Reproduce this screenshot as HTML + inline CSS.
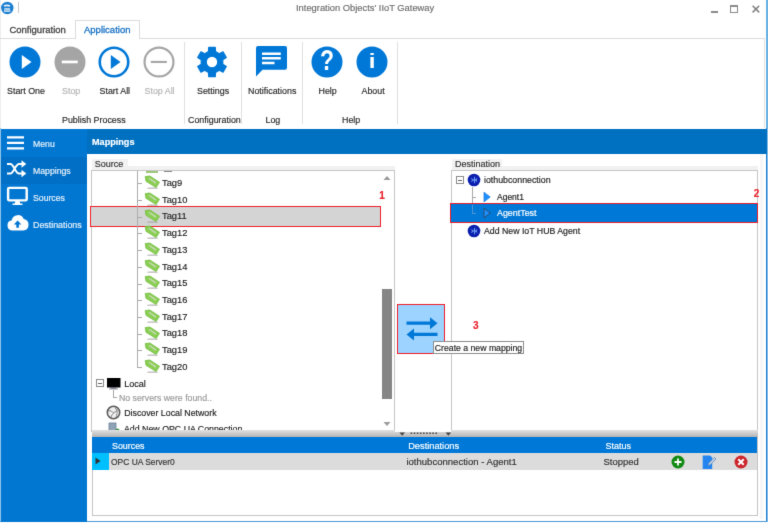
<!DOCTYPE html>
<html lang="en"><head><meta charset="utf-8"><title>Integration Objects' IIoT Gateway</title>
<style>
html,body{margin:0;padding:0;}
body{width:768px;height:524px;overflow:hidden;background:#fff;position:relative;font-family:"Liberation Sans",sans-serif;}
#app{position:absolute;left:0;top:0;width:768px;height:524px;overflow:hidden;background:#fff;filter:url(#soft);}
.b{position:absolute;display:block;}
.t{position:absolute;white-space:pre;line-height:1.2;font-family:"Liberation Sans",sans-serif;-webkit-text-stroke:0.16px currentColor;}
</style></head><body>
<svg width="0" height="0" style="position:absolute;left:0;top:0" aria-hidden="true"><filter id="soft" x="0" y="0" width="100%" height="100%" color-interpolation-filters="sRGB"><feConvolveMatrix order="3" kernelMatrix="0.125 1.0 0.125 1.0 8.0 1.0 0.125 1.0 0.125" edgeMode="duplicate" preserveAlpha="true"/></filter></svg>
<div id="app">
<div class="b" style="left:0px;top:0px;width:1px;height:128px;background:#ededed;"></div>
<div class="b" style="left:0px;top:128px;width:1px;height:394px;background:#8cc3ea;"></div>
<div class="b" style="left:766px;top:0px;width:2px;height:128px;background:#6cb2e3;"></div>
<div class="b" style="left:765.8px;top:128px;width:1.2px;height:394px;background:#1f80d2;"></div>
<div class="b" style="left:767px;top:128px;width:1px;height:394px;background:#8ac0ea;"></div>
<div class="b" style="left:0px;top:521px;width:767px;height:1px;background:#4a9bdb;"></div>
<svg class="b" style="left:0;top:1px" width="16" height="16" viewBox="0 0 16 16">
<circle cx="7.3" cy="7" r="6.2" fill="#1b7fd0"/>
<path d="M4.3 7.2h5.6l0.6 3.8H3.9z" fill="#e8f2fb"/><path d="M3.6 4.2q3.6-1.600 6.800 0l-0.800 1.600q-2.600-0.900-5.200 0z" fill="#e8f2fb"/>
<path d="M4 8.800h6.200M4 10h6.400" stroke="#1b7fd0" stroke-width="0.500"/>
</svg>
<div class="b" style="left:18px;top:2px;width:1px;height:11px;background:#c8c8c8;"></div>
<div class="t " style="left:296px;top:3.1px;font-size:9.35px;color:#6e6e6e;">Integration Objects' IIoT Gateway</div>
<div class="b" style="left:711px;top:11px;width:7px;height:2px;background:#8a8a8a;"></div>
<div class="b" style="left:730.2px;top:5px;width:8px;height:8px;border:1px solid #8a8a8a;box-sizing:border-box;border-top-width:2px;"></div>
<svg class="b" style="left:751px;top:4px" width="10" height="10" viewBox="0 0 10 10"><path d="M1.600 1.800l6.600 6.600M8.200 1.800l-6.600 6.600" stroke="#808080" stroke-width="1.5" fill="none"/></svg>
<div class="b" style="left:0px;top:38px;width:765px;height:1px;background:#dcdcdc;"></div>
<div class="b" style="left:75px;top:20px;width:64.5px;height:19px;background:#fff;border:1px solid #dcdcdc;box-sizing:border-box;border-bottom:none;"></div>
<div class="t " style="left:9.4px;top:23.6px;font-size:9.5px;color:#444;-webkit-text-stroke-width:0.3px;">Configuration</div>
<div class="t " style="left:84px;top:23.6px;font-size:9.5px;color:#1a73c4;-webkit-text-stroke-width:0.3px;">Application</div>
<div class="b" style="left:764px;top:39px;width:1px;height:89px;background:#e4e4e4;"></div>
<svg class="b" style="left:8.4px;top:44.5px" width="34" height="34" viewBox="-17 -17 34 34"><circle r="15.5" fill="#0078d7"/><path d="M-3.2 -7.1L6.5 0L-3.2 7.1z" fill="#fff"/></svg>
<svg class="b" style="left:52.7px;top:44.5px" width="34" height="34" viewBox="-17 -17 34 34"><circle r="15.5" fill="#a5a5a5"/><rect x="-8.2" y="-1.4" width="16" height="2.7" fill="#fff"/></svg>
<svg class="b" style="left:97.4px;top:44.5px" width="34" height="34" viewBox="-17 -17 34 34"><circle r="14.25" fill="#fff" stroke="#0078d7" stroke-width="2.6"/><path d="M-3.2 -7.1L6.5 0L-3.2 7.1z" fill="#0078d7"/></svg>
<svg class="b" style="left:141.6px;top:44.5px" width="34" height="34" viewBox="-17 -17 34 34"><circle r="14.45" fill="#fff" stroke="#a5a5a5" stroke-width="2.2"/><rect x="-8.2" y="-1.1" width="16" height="2.1" fill="#a5a5a5"/></svg>
<svg class="b" style="left:195.2px;top:44.5px" width="34" height="34" viewBox="-17 -17 34 34"><path d="M-3.51 -10.43 L-3.27 -14.64 L3.27 -14.64 L3.51 -10.43 L7.27 -8.25 L11.04 -10.15 L14.31 -4.49 L10.78 -2.17 L10.78 2.17 L14.31 4.49 L11.04 10.15 L7.27 8.25 L3.51 10.43 L3.27 14.64 L-3.27 14.64 L-3.51 10.43 L-7.27 8.25 L-11.04 10.15 L-14.31 4.49 L-10.78 2.17 L-10.78 -2.17 L-14.31 -4.49 L-11.04 -10.15 L-7.27 -8.25Z M5.8 0 A5.8 5.8 0 1 0 -5.8 0 A5.8 5.8 0 1 0 5.8 0Z" fill="#0078d7" fill-rule="evenodd" stroke="#0078d7" stroke-width="1.2" stroke-linejoin="round"/></svg>
<svg class="b" style="left:254.2px;top:44px" width="36" height="34" viewBox="0 0 36 34">
<path d="M4 2h27a2 2 0 0 1 2 2v19.8a2 2 0 0 1-2 2H8.5L2 32.4V4a2 2 0 0 1 2-2z" fill="#0078d7"/>
<path d="M8 9.7h18.8M8 14.3h18.8M8 19h12.5" stroke="#fff" stroke-width="2.6" fill="none"/></svg>
<svg class="b" style="left:310.3px;top:44.5px" width="34" height="34" viewBox="-17 -17 34 34"><circle r="15.5" fill="#0078d7"/><text x="0" y="6.5" transform="scale(1,1.3)" text-anchor="middle" font-family="Liberation Sans, sans-serif" font-weight="bold" font-size="23" fill="#fff">?</text></svg>
<svg class="b" style="left:354.7px;top:44.5px" width="34" height="34" viewBox="-17 -17 34 34"><circle r="15.5" fill="#0078d7"/><text x="0" y="6.4" transform="scale(1.18,1)" text-anchor="middle" font-family="Liberation Sans, sans-serif" font-weight="bold" font-size="20.5" fill="#fff">i</text></svg>
<div class="t " style="left:7px;top:85.7px;font-size:8.9px;color:#2a2a2a;">Start One</div>
<div class="t " style="left:62px;top:85.7px;font-size:8.9px;color:#b4b4b4;">Stop</div>
<div class="t " style="left:99.5px;top:85.7px;font-size:8.9px;color:#2a2a2a;">Start All</div>
<div class="t " style="left:144.5px;top:85.7px;font-size:8.9px;color:#b4b4b4;">Stop All</div>
<div class="t " style="left:197px;top:85.7px;font-size:8.9px;color:#2a2a2a;">Settings</div>
<div class="t " style="left:248px;top:85.7px;font-size:8.9px;color:#2a2a2a;">Notifications</div>
<div class="t " style="left:318.5px;top:85.7px;font-size:8.9px;color:#2a2a2a;">Help</div>
<div class="t " style="left:361.5px;top:85.7px;font-size:8.9px;color:#2a2a2a;">About</div>
<div class="t " style="left:62px;top:114.8px;font-size:8.9px;color:#2a2a2a;">Publish Process</div>
<div class="t " style="left:188px;top:114.8px;font-size:8.9px;color:#2a2a2a;">Configuration</div>
<div class="t " style="left:265.5px;top:114.8px;font-size:8.9px;color:#2a2a2a;">Log</div>
<div class="t " style="left:342px;top:114.8px;font-size:8.9px;color:#2a2a2a;">Help</div>
<div class="b" style="left:184px;top:42px;width:1px;height:82px;background:#e0e0e0;"></div>
<div class="b" style="left:241px;top:42px;width:1px;height:82px;background:#e0e0e0;"></div>
<div class="b" style="left:302px;top:42px;width:1px;height:82px;background:#e0e0e0;"></div>
<div class="b" style="left:397px;top:42px;width:1px;height:82px;background:#e0e0e0;"></div>
<div class="b" style="left:1px;top:128.5px;width:766px;height:25.1px;background:#0070c0;"></div>
<div class="b" style="left:1px;top:128.5px;width:86px;height:393px;background:#0277d2;"></div>
<div class="b" style="left:1px;top:156.5px;width:86px;height:27px;background:#006fc5;"></div>
<div class="t " style="left:92px;top:136.5px;font-size:9.1px;color:#fff;font-weight:bold;">Mappings</div>
<svg class="b" style="left:6px;top:134px" width="20" height="18" viewBox="0 0 20 18"><path d="M1 3.3h17M1 8.8h17M1 14.3h17" stroke="#fff" stroke-width="2.3"/></svg>
<svg class="b" style="left:6px;top:159px" width="22" height="20" viewBox="0 0 22 20">
<path d="M1 5h3.5c3 0 5 9.5 8.500 9.500H17M1 14.500h3.500c3 0 5-9.500 8.500-9.500H17" stroke="#fff" stroke-width="2" fill="none"/>
<path d="M15.500 1.300L20.300 5l-4.800 3.700zM15.500 10.800l4.800 3.700-4.800 3.700z" fill="#fff"/></svg>
<svg class="b" style="left:6px;top:186px" width="24" height="20" viewBox="0 0 24 20">
<rect x="2.1" y="1.900" width="18.600" height="12.500" rx="1.200" fill="none" stroke="#fff" stroke-width="2.4"/>
<path d="M9.500 15h4l0.800 2.600h2.200v1.400h-10v-1.400h2.200z" fill="#fff"/></svg>
<svg class="b" style="left:6px;top:212px" width="24" height="20" viewBox="0 0 24 20">
<path d="M6.500 18.500a5.200 5.200 0 0 1-0.800-10.300a6.300 6.300 0 0 1 12-1.200a5.800 5.800 0 0 1-0.500 11.500z" fill="#fff"/>
<path d="M11.600 8.600l3.800 4h-2.500v3.200h-2.600v-3.200H7.800z" fill="#0277d2"/></svg>
<div class="t " style="left:33px;top:138.5px;font-size:8.7px;color:#e8f2fb;">Menu</div>
<div class="t " style="left:33px;top:165.5px;font-size:8.7px;color:#e8f2fb;">Mappings</div>
<div class="t " style="left:33px;top:192.5px;font-size:8.7px;color:#e8f2fb;">Sources</div>
<div class="t " style="left:33px;top:219.5px;font-size:8.85px;color:#e8f2fb;">Destinations</div>
<div class="b" style="left:87px;top:153.6px;width:678.8px;height:367.4px;background:#fff;"></div>
<div class="b" style="left:760px;top:154px;width:2.8px;height:365px;background:#f6f6f6;"></div>
<div class="b" style="left:92px;top:159px;width:36px;height:12px;background:#f3f3f3;"></div>
<div class="b" style="left:92px;top:165.5px;width:303px;height:5px;background:#f1f1f1;"></div>
<div class="t " style="left:94.7px;top:158.9px;font-size:9px;color:#333;">Source</div>
<div class="b" style="left:91.3px;top:169.7px;width:303.5px;height:262px;background:#fff;border:1.4px solid #c6c6c6;box-sizing:border-box;"></div>
<div class="b" style="left:90.3px;top:206.3px;width:290.9px;height:21.1px;background:#d4d4d4;border:1.8px solid #ee1f28;box-sizing:border-box;"></div>
<div class="b" style="left:137.2px;top:171px;width:1.3px;height:197px;background:#adadad;"></div>
<div class="b" style="left:138px;top:183px;width:4px;height:1px;background:#a8a8a8;"></div>
<svg class="b" style="left:144.3px;top:175.2px" width="17" height="15" viewBox="0 0 17 15">
<ellipse cx="8.500" cy="13.200" rx="5.500" ry="0.900" fill="#9a9a9a" opacity="0.550"/>
<path d="M1.200 1.600L5.800 1l9.700 6.300-3.400 5.200L2 6.300z" fill="#8acf53" stroke="#74bb40" stroke-width="0.800" stroke-linejoin="round"/>
<path d="M4 3.600l2.400-0.300 6 4-1 1.500z" fill="#c6d8b6" opacity="0.900"/></svg>
<div class="t " style="left:162px;top:178.0px;font-size:9.35px;color:#222;">Tag9</div>
<div class="b" style="left:138px;top:200px;width:4px;height:1px;background:#a8a8a8;"></div>
<svg class="b" style="left:144.3px;top:191.9px" width="17" height="15" viewBox="0 0 17 15">
<ellipse cx="8.500" cy="13.200" rx="5.500" ry="0.900" fill="#9a9a9a" opacity="0.550"/>
<path d="M1.200 1.600L5.800 1l9.700 6.300-3.400 5.200L2 6.300z" fill="#8acf53" stroke="#74bb40" stroke-width="0.800" stroke-linejoin="round"/>
<path d="M4 3.600l2.400-0.300 6 4-1 1.500z" fill="#c6d8b6" opacity="0.900"/></svg>
<div class="t " style="left:162px;top:194.7px;font-size:9.35px;color:#222;">Tag10</div>
<div class="b" style="left:138px;top:217px;width:4px;height:1px;background:#a8a8a8;"></div>
<svg class="b" style="left:144.3px;top:208.6px" width="17" height="15" viewBox="0 0 17 15">
<ellipse cx="8.500" cy="13.200" rx="5.500" ry="0.900" fill="#9a9a9a" opacity="0.550"/>
<path d="M1.200 1.600L5.800 1l9.700 6.300-3.400 5.200L2 6.300z" fill="#8acf53" stroke="#74bb40" stroke-width="0.800" stroke-linejoin="round"/>
<path d="M4 3.600l2.400-0.300 6 4-1 1.500z" fill="#c6d8b6" opacity="0.900"/></svg>
<div class="t " style="left:162px;top:211.4px;font-size:9.35px;color:#222;">Tag11</div>
<div class="b" style="left:138px;top:233px;width:4px;height:1px;background:#a8a8a8;"></div>
<svg class="b" style="left:144.3px;top:225.3px" width="17" height="15" viewBox="0 0 17 15">
<ellipse cx="8.500" cy="13.200" rx="5.500" ry="0.900" fill="#9a9a9a" opacity="0.550"/>
<path d="M1.200 1.600L5.800 1l9.700 6.300-3.400 5.200L2 6.300z" fill="#8acf53" stroke="#74bb40" stroke-width="0.800" stroke-linejoin="round"/>
<path d="M4 3.600l2.400-0.300 6 4-1 1.500z" fill="#c6d8b6" opacity="0.900"/></svg>
<div class="t " style="left:162px;top:228.1px;font-size:9.35px;color:#222;">Tag12</div>
<div class="b" style="left:138px;top:250px;width:4px;height:1px;background:#a8a8a8;"></div>
<svg class="b" style="left:144.3px;top:242.0px" width="17" height="15" viewBox="0 0 17 15">
<ellipse cx="8.500" cy="13.200" rx="5.500" ry="0.900" fill="#9a9a9a" opacity="0.550"/>
<path d="M1.200 1.600L5.800 1l9.700 6.300-3.400 5.200L2 6.300z" fill="#8acf53" stroke="#74bb40" stroke-width="0.800" stroke-linejoin="round"/>
<path d="M4 3.600l2.400-0.300 6 4-1 1.500z" fill="#c6d8b6" opacity="0.900"/></svg>
<div class="t " style="left:162px;top:244.8px;font-size:9.35px;color:#222;">Tag13</div>
<div class="b" style="left:138px;top:267px;width:4px;height:1px;background:#a8a8a8;"></div>
<svg class="b" style="left:144.3px;top:258.7px" width="17" height="15" viewBox="0 0 17 15">
<ellipse cx="8.500" cy="13.200" rx="5.500" ry="0.900" fill="#9a9a9a" opacity="0.550"/>
<path d="M1.200 1.600L5.800 1l9.700 6.300-3.400 5.200L2 6.300z" fill="#8acf53" stroke="#74bb40" stroke-width="0.800" stroke-linejoin="round"/>
<path d="M4 3.600l2.400-0.300 6 4-1 1.500z" fill="#c6d8b6" opacity="0.900"/></svg>
<div class="t " style="left:162px;top:261.5px;font-size:9.35px;color:#222;">Tag14</div>
<div class="b" style="left:138px;top:284px;width:4px;height:1px;background:#a8a8a8;"></div>
<svg class="b" style="left:144.3px;top:275.4px" width="17" height="15" viewBox="0 0 17 15">
<ellipse cx="8.500" cy="13.200" rx="5.500" ry="0.900" fill="#9a9a9a" opacity="0.550"/>
<path d="M1.200 1.600L5.800 1l9.700 6.300-3.400 5.200L2 6.300z" fill="#8acf53" stroke="#74bb40" stroke-width="0.800" stroke-linejoin="round"/>
<path d="M4 3.600l2.400-0.300 6 4-1 1.500z" fill="#c6d8b6" opacity="0.900"/></svg>
<div class="t " style="left:162px;top:278.2px;font-size:9.35px;color:#222;">Tag15</div>
<div class="b" style="left:138px;top:300px;width:4px;height:1px;background:#a8a8a8;"></div>
<svg class="b" style="left:144.3px;top:292.1px" width="17" height="15" viewBox="0 0 17 15">
<ellipse cx="8.500" cy="13.200" rx="5.500" ry="0.900" fill="#9a9a9a" opacity="0.550"/>
<path d="M1.200 1.600L5.800 1l9.700 6.300-3.400 5.200L2 6.300z" fill="#8acf53" stroke="#74bb40" stroke-width="0.800" stroke-linejoin="round"/>
<path d="M4 3.600l2.400-0.300 6 4-1 1.500z" fill="#c6d8b6" opacity="0.900"/></svg>
<div class="t " style="left:162px;top:294.9px;font-size:9.35px;color:#222;">Tag16</div>
<div class="b" style="left:138px;top:317px;width:4px;height:1px;background:#a8a8a8;"></div>
<svg class="b" style="left:144.3px;top:308.8px" width="17" height="15" viewBox="0 0 17 15">
<ellipse cx="8.500" cy="13.200" rx="5.500" ry="0.900" fill="#9a9a9a" opacity="0.550"/>
<path d="M1.200 1.600L5.800 1l9.700 6.300-3.400 5.200L2 6.300z" fill="#8acf53" stroke="#74bb40" stroke-width="0.800" stroke-linejoin="round"/>
<path d="M4 3.600l2.400-0.300 6 4-1 1.500z" fill="#c6d8b6" opacity="0.900"/></svg>
<div class="t " style="left:162px;top:311.6px;font-size:9.35px;color:#222;">Tag17</div>
<div class="b" style="left:138px;top:334px;width:4px;height:1px;background:#a8a8a8;"></div>
<svg class="b" style="left:144.3px;top:325.5px" width="17" height="15" viewBox="0 0 17 15">
<ellipse cx="8.500" cy="13.200" rx="5.500" ry="0.900" fill="#9a9a9a" opacity="0.550"/>
<path d="M1.200 1.600L5.800 1l9.700 6.300-3.400 5.200L2 6.300z" fill="#8acf53" stroke="#74bb40" stroke-width="0.800" stroke-linejoin="round"/>
<path d="M4 3.600l2.400-0.300 6 4-1 1.500z" fill="#c6d8b6" opacity="0.900"/></svg>
<div class="t " style="left:162px;top:328.3px;font-size:9.35px;color:#222;">Tag18</div>
<div class="b" style="left:138px;top:350px;width:4px;height:1px;background:#a8a8a8;"></div>
<svg class="b" style="left:144.3px;top:342.2px" width="17" height="15" viewBox="0 0 17 15">
<ellipse cx="8.500" cy="13.200" rx="5.500" ry="0.900" fill="#9a9a9a" opacity="0.550"/>
<path d="M1.200 1.600L5.800 1l9.700 6.300-3.400 5.200L2 6.300z" fill="#8acf53" stroke="#74bb40" stroke-width="0.800" stroke-linejoin="round"/>
<path d="M4 3.600l2.400-0.300 6 4-1 1.500z" fill="#c6d8b6" opacity="0.900"/></svg>
<div class="t " style="left:162px;top:345.0px;font-size:9.35px;color:#222;">Tag19</div>
<div class="b" style="left:138px;top:367px;width:4px;height:1px;background:#a8a8a8;"></div>
<svg class="b" style="left:144.3px;top:358.9px" width="17" height="15" viewBox="0 0 17 15">
<ellipse cx="8.500" cy="13.200" rx="5.500" ry="0.900" fill="#9a9a9a" opacity="0.550"/>
<path d="M1.200 1.600L5.800 1l9.700 6.300-3.400 5.200L2 6.300z" fill="#8acf53" stroke="#74bb40" stroke-width="0.800" stroke-linejoin="round"/>
<path d="M4 3.600l2.400-0.300 6 4-1 1.500z" fill="#c6d8b6" opacity="0.900"/></svg>
<div class="t " style="left:162px;top:361.7px;font-size:9.35px;color:#222;">Tag20</div>
<div class="b" style="left:146px;top:171px;width:12px;height:1.5px;background:#9cc77a;"></div>
<div class="b" style="left:164px;top:171px;width:8px;height:1px;background:#888;"></div>
<div class="b" style="left:96px;top:379px;width:8px;height:8px;background:#fff;border:1px solid #8a8a8a;box-sizing:border-box;"></div>
<div class="b" style="left:98px;top:382.5px;width:4px;height:1px;background:#666;"></div>
<svg class="b" style="left:106px;top:377px" width="16" height="14" viewBox="0 0 16 14"><rect x="1" y="1" width="13.500" height="9.500" fill="#000"/><rect x="4.500" y="10.500" width="6" height="1.200" fill="#445"/><rect x="3" y="11.500" width="9" height="1" fill="#99a"/></svg>
<div class="t " style="left:124.2px;top:378.9px;font-size:9.05px;color:#222;">Local</div>
<div class="b" style="left:113px;top:390px;width:1px;height:8px;background:#a8a8a8;"></div>
<div class="b" style="left:113px;top:397px;width:4px;height:1px;background:#a8a8a8;"></div>
<div class="t " style="left:119px;top:392.5px;font-size:8.75px;color:#9a9a9a;">No servers were found..</div>
<svg class="b" style="left:106px;top:405px" width="16" height="16" viewBox="0 0 16 16"><circle cx="7.500" cy="7.500" r="6.200" fill="#f0f0f0" stroke="#5a5a5a" stroke-width="1.600"/><path d="M2 6c3-1 4 1 5.500 1.500S11 5 13 4M5 13c0-3 2-4 3-5M9 2.500c1 2 2.500 3 2 6s-1 3-1 4" stroke="#777" stroke-width="0.900" fill="none"/></svg>
<div class="t " style="left:124.2px;top:407.9px;font-size:8.8px;color:#222;">Discover Local Network</div>
<svg class="b" style="left:107px;top:422px" width="14" height="10" viewBox="0 0 14 10"><rect x="2" y="1" width="7" height="9" fill="#8fa3b8" stroke="#6b7f95" stroke-width="0.800"/><circle cx="10.500" cy="8.500" r="2" fill="#3a9a3a"/></svg>
<div class="b" style="left:122px;top:423px;width:130px;height:8.5px;overflow:hidden"><div class="t" style="left:2px;top:0.5px;font-size:8.8px;color:#222">Add New OPC UA Connection</div></div>
<div class="b" style="left:382px;top:171px;width:11px;height:260px;background:#fff;"></div>
<div class="b" style="left:381.5px;top:288.8px;width:10.5px;height:110px;background:#858585;"></div>
<svg class="b" style="left:383px;top:175px" width="8" height="6" viewBox="0 0 8 6"><path d="M0.500 5L4 1l3.500 4z" fill="#9a9a9a"/></svg>
<svg class="b" style="left:383px;top:420.700px" width="8" height="6" viewBox="0 0 8 6"><path d="M0.500 1L4 5l3.500-4z" fill="#9a9a9a"/></svg>
<div class="b" style="left:397.4px;top:303.5px;width:48.1px;height:50px;background:#9dd3ff;border:1.8px solid #ee1f28;box-sizing:border-box;"></div>
<svg class="b" style="left:404px;top:314px" width="36" height="30" viewBox="0 0 36 30">
<path d="M2.500 7.500h23.500V3.200l7.500 6-7.500 6V10.700H2.500z" fill="#0078d7"/>
<path d="M33.500 18.700H10v-4.300l-7.500 6 7.500 6V21.900h23.500z" fill="#0078d7"/></svg>
<div class="b" style="left:452px;top:159px;width:50px;height:12px;background:#f3f3f3;"></div>
<div class="b" style="left:452px;top:165.5px;width:306px;height:5px;background:#f1f1f1;"></div>
<div class="t " style="left:455px;top:158.9px;font-size:9px;color:#333;">Destination</div>
<div class="b" style="left:451.2px;top:169.7px;width:306.6px;height:262px;background:#fff;border:1.4px solid #c6c6c6;box-sizing:border-box;"></div>
<div class="b" style="left:456px;top:176px;width:8px;height:8px;background:#fff;border:1px solid #8a8a8a;box-sizing:border-box;"></div>
<div class="b" style="left:458px;top:179.5px;width:4px;height:1px;background:#666;"></div>
<svg class="b" style="left:467px;top:173px" width="14" height="14" viewBox="0 0 14 14"><circle cx="7" cy="7" r="6.300" fill="#0b1fae"/><path d="M7.600 3.800v6.400M4.600 5.200q2 1.800 0 3.600M9.800 5.400q-1.600 1.600 0 3.200M5.600 7h4" stroke="#7fb2ff" stroke-width="0.900" fill="none"/></svg>
<div class="t " style="left:484px;top:175px;font-size:8.8px;color:#222;">iothubconnection</div>
<div class="b" style="left:472px;top:187px;width:1px;height:27px;background:#a8a8a8;"></div>
<div class="b" style="left:472px;top:197px;width:4px;height:1px;background:#a8a8a8;"></div>
<svg class="b" style="left:483px;top:191px" width="9" height="12" viewBox="0 0 9 12"><path d="M1 1.200L7.200 6 1 10.800z" fill="#1e90ff" stroke="#1e7fe0" stroke-width="0.800"/></svg>
<div class="t " style="left:497px;top:191.9px;font-size:8.5px;color:#222;">Agent1</div>
<div class="b" style="left:450.2px;top:202.9px;width:307.5px;height:20px;background:#0078d7;border:1.8px solid #ee1f28;box-sizing:border-box;"></div>
<div class="b" style="left:472px;top:205px;width:1px;height:9px;background:#4f96d4;"></div>
<div class="b" style="left:472px;top:213px;width:4px;height:1px;background:#4f96d4;"></div>
<svg class="b" style="left:483px;top:207px" width="9" height="12" viewBox="0 0 9 12"><path d="M1 1.200L7.200 6 1 10.800z" fill="#1e90ff" stroke="#2c4c6e" stroke-width="1"/></svg>
<div class="t " style="left:497px;top:208.2px;font-size:8.9px;color:#fff;">AgentTest</div>
<svg class="b" style="left:467px;top:223.5px" width="14" height="14" viewBox="0 0 14 14"><circle cx="7" cy="7" r="6.300" fill="#0b1fae"/><path d="M7.600 3.800v6.400M4.600 5.200q2 1.800 0 3.600M9.800 5.400q-1.600 1.600 0 3.200M5.600 7h4" stroke="#7fb2ff" stroke-width="0.900" fill="none"/></svg>
<div class="t " style="left:484px;top:225.5px;font-size:8.75px;color:#222;">Add New IoT HUB Agent</div>
<div class="b" style="left:433px;top:341px;width:91px;height:13px;background:#fff;border:1px solid #8c8c8c;box-sizing:border-box;"></div>
<div class="t " style="left:434.8px;top:343px;font-size:8.7px;color:#222;">Create a new mapping</div>
<div class="b" style="left:92px;top:431px;width:666px;height:85px;background:#fff;border:1px solid #c4c4c4;box-sizing:border-box;border-top:none;"></div>
<div class="b" style="left:92px;top:430.3px;width:666px;height:6.5px;background:linear-gradient(#e2e2e2,#b4b4b4);"></div>
<div class="b" style="left:394.8px;top:429px;width:56.4px;height:3px;background:#fff;"></div>
<svg class="b" style="left:398.5px;top:430.700px" width="54" height="6" viewBox="0 0 54 6"><path d="M0.400 1.500h5.600l-2.800 3.300zM46.600 1.500h5.600l-2.800 3.300z" fill="#454545"/><path d="M11.600 2.300h28" stroke="#454545" stroke-width="1.500" stroke-dasharray="1.600 1.500"/></svg>
<div class="b" style="left:92px;top:437px;width:665px;height:16px;background:#0078d7;"></div>
<div class="b" style="left:92px;top:453px;width:665px;height:17px;background:#dcdcdc;"></div>
<div class="b" style="left:92px;top:453px;width:16.5px;height:17px;background:#00bfff;"></div>
<svg class="b" style="left:94px;top:456px" width="8" height="10" viewBox="0 0 8 10"><path d="M1.500 1.500L6.500 5l-5 3.500z" fill="#333"/></svg>
<div class="t " style="left:112px;top:440.8px;font-size:8.9px;color:#fff;">Sources</div>
<div class="t " style="left:408.2px;top:440.8px;font-size:9.25px;color:#fff;">Destinations</div>
<div class="t " style="left:605.4px;top:440.8px;font-size:9.0px;color:#fff;">Status</div>
<div class="t " style="left:111px;top:456.6px;font-size:8.45px;color:#333;">OPC UA Server0</div>
<div class="t " style="left:406.4px;top:456.2px;font-size:9.55px;color:#333;">iothubconnection - Agent1</div>
<div class="t " style="left:603.5px;top:456.2px;font-size:9.45px;color:#333;">Stopped</div>
<svg class="b" style="left:671.200px;top:454.500px" width="14" height="14" viewBox="0 0 14 14"><circle cx="7" cy="7" r="6.500" fill="#128a12"/><path d="M7 3.500v7M3.500 7h7" stroke="#fff" stroke-width="1.800"/></svg>
<svg class="b" style="left:701px;top:453.500px" width="17" height="17" viewBox="0 0 17 17"><path d="M1.700 1.500h7.500l2 2V15H1.700z" fill="#2585f0"/><path d="M7 11.800l0.800-2.800 5.600-5.600 1.600 1.600-5.600 5.600z" fill="#c4d2e4" stroke="#5a84b8" stroke-width="0.700"/></svg>
<svg class="b" style="left:734px;top:454.500px" width="14" height="14" viewBox="0 0 14 14"><circle cx="7" cy="7" r="6.500" fill="#cc262c"/><path d="M4.300 4.300l5.400 5.400M9.700 4.300l-5.400 5.400" stroke="#fff" stroke-width="2"/></svg>
<div class="t " style="left:379.3px;top:189.6px;font-size:10px;color:#ea1f27;font-weight:bold;">1</div>
<div class="t " style="left:753.8px;top:188.3px;font-size:10px;color:#ea1f27;font-weight:bold;">2</div>
<div class="t " style="left:473px;top:320.3px;font-size:10px;color:#ea1f27;font-weight:bold;">3</div>
</div></body></html>
